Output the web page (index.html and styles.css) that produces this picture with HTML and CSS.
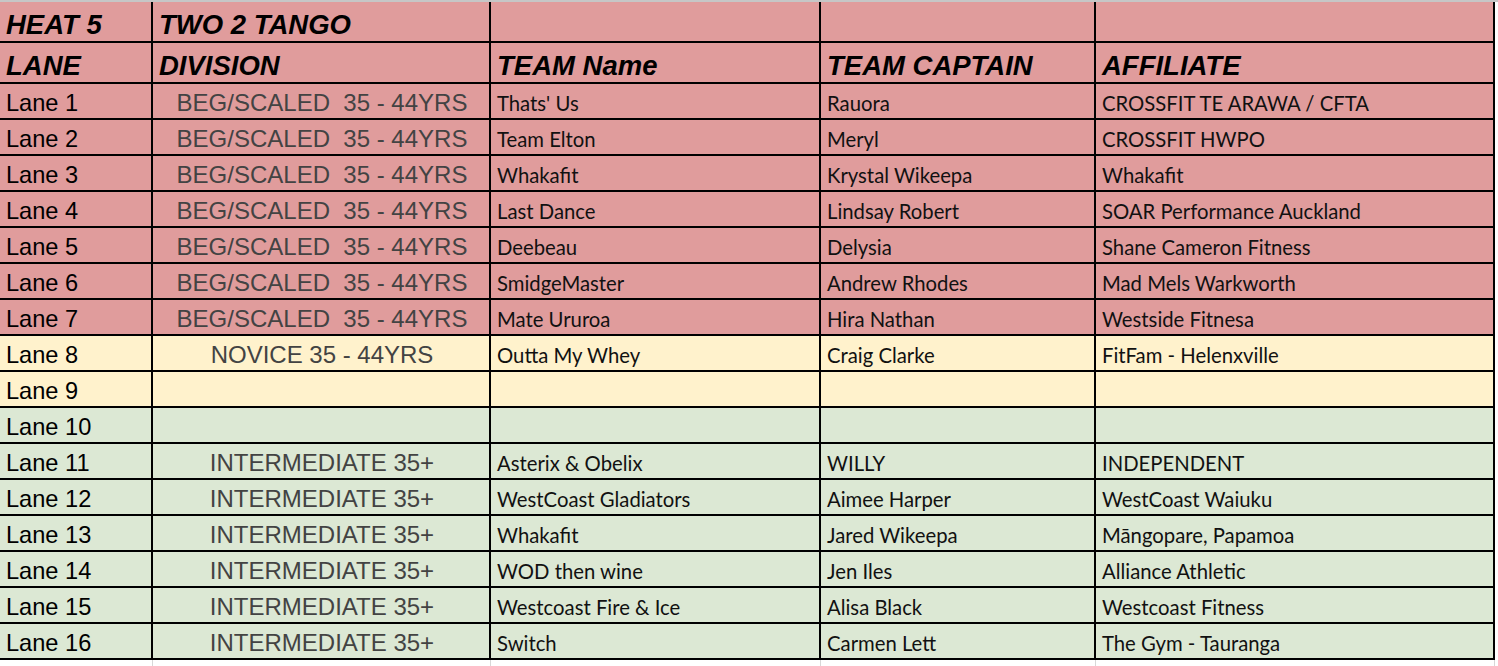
FILE: index.html
```html
<!DOCTYPE html>
<html>
<head>
<meta charset="utf-8">
<link rel="stylesheet" href="styles.css">
</head>
<body>
<div class="sheet">
  <div class="row head pink">
    <div class="c hd">HEAT 5</div>
    <div class="c hd">TWO 2 TANGO</div>
    <div class="c hd"></div>
    <div class="c hd"></div>
    <div class="c hd"></div>
  </div>
  <div class="row head pink">
    <div class="c hd">LANE</div>
    <div class="c hd">DIVISION</div>
    <div class="c hd">TEAM Name</div>
    <div class="c hd">TEAM CAPTAIN</div>
    <div class="c hd">AFFILIATE</div>
  </div>
  <div class="row pink"><div class="c lane">Lane 1</div><div class="c div">BEG/SCALED&nbsp; 35 - 44YRS</div><div class="c txt">Thats' Us</div><div class="c txt">Rauora</div><div class="c txt">CROSSFIT TE ARAWA / CFTA</div></div>
  <div class="row pink"><div class="c lane">Lane 2</div><div class="c div">BEG/SCALED&nbsp; 35 - 44YRS</div><div class="c txt">Team Elton</div><div class="c txt">Meryl</div><div class="c txt">CROSSFIT HWPO</div></div>
  <div class="row pink"><div class="c lane">Lane 3</div><div class="c div">BEG/SCALED&nbsp; 35 - 44YRS</div><div class="c txt">Whakafit</div><div class="c txt">Krystal Wikeepa</div><div class="c txt">Whakafit</div></div>
  <div class="row pink"><div class="c lane">Lane 4</div><div class="c div">BEG/SCALED&nbsp; 35 - 44YRS</div><div class="c txt">Last Dance</div><div class="c txt">Lindsay Robert</div><div class="c txt">SOAR Performance Auckland</div></div>
  <div class="row pink"><div class="c lane">Lane 5</div><div class="c div">BEG/SCALED&nbsp; 35 - 44YRS</div><div class="c txt">Deebeau</div><div class="c txt">Delysia</div><div class="c txt">Shane Cameron Fitness</div></div>
  <div class="row pink"><div class="c lane">Lane 6</div><div class="c div">BEG/SCALED&nbsp; 35 - 44YRS</div><div class="c txt">SmidgeMaster</div><div class="c txt">Andrew Rhodes</div><div class="c txt">Mad Mels Warkworth</div></div>
  <div class="row pink"><div class="c lane">Lane 7</div><div class="c div">BEG/SCALED&nbsp; 35 - 44YRS</div><div class="c txt">Mate Ururoa</div><div class="c txt">Hira Nathan</div><div class="c txt">Westside Fitnesa</div></div>
  <div class="row yellow"><div class="c lane">Lane 8</div><div class="c div">NOVICE 35 - 44YRS</div><div class="c txt">Outta My Whey</div><div class="c txt">Craig Clarke</div><div class="c txt">FitFam - Helenxville</div></div>
  <div class="row yellow"><div class="c lane">Lane 9</div><div class="c div"></div><div class="c txt"></div><div class="c txt"></div><div class="c txt"></div></div>
  <div class="row green"><div class="c lane">Lane 10</div><div class="c div"></div><div class="c txt"></div><div class="c txt"></div><div class="c txt"></div></div>
  <div class="row green"><div class="c lane">Lane 11</div><div class="c div">INTERMEDIATE 35+</div><div class="c txt">Asterix &amp; Obelix</div><div class="c txt">WILLY</div><div class="c txt">INDEPENDENT</div></div>
  <div class="row green"><div class="c lane">Lane 12</div><div class="c div">INTERMEDIATE 35+</div><div class="c txt">WestCoast Gladiators</div><div class="c txt">Aimee Harper</div><div class="c txt">WestCoast Waiuku</div></div>
  <div class="row green"><div class="c lane">Lane 13</div><div class="c div">INTERMEDIATE 35+</div><div class="c txt">Whakafit</div><div class="c txt">Jared Wikeepa</div><div class="c txt">Māngopare, Papamoa</div></div>
  <div class="row green"><div class="c lane">Lane 14</div><div class="c div">INTERMEDIATE 35+</div><div class="c txt">WOD then wine</div><div class="c txt">Jen Iles</div><div class="c txt">Alliance Athletic</div></div>
  <div class="row green"><div class="c lane">Lane 15</div><div class="c div">INTERMEDIATE 35+</div><div class="c txt">Westcoast Fire &amp; Ice</div><div class="c txt">Alisa Black</div><div class="c txt">Westcoast Fitness</div></div>
  <div class="row green"><div class="c lane">Lane 16</div><div class="c div">INTERMEDIATE 35+</div><div class="c txt">Switch</div><div class="c txt">Carmen Lett</div><div class="c txt">The Gym - Tauranga</div></div>
  <div class="row filler"><div class="c"></div><div class="c"></div><div class="c"></div><div class="c"></div><div class="c"></div></div>
</div>
</body>
</html>
```

FILE: styles.css
```css
html, body {
  margin: 0;
  padding: 0;
  background: #ffffff;
}
.sheet {
  border-top: 2px solid #c6c6c6;
  width: 1498px;
}
.row {
  display: grid;
  grid-template-columns: 153px 338px 330px 275px 399px;
  height: 36px;
}
.row.head {
  height: 41px;
}
.pink .c { background: #e09c9c; }
.yellow .c { background: #fff2cc; }
.green .c { background: #dce8d4; }
.c {
  box-sizing: border-box;
  border-right: 2px solid #000;
  border-bottom: 2px solid #000;
  display: flex;
  align-items: flex-end;
  padding: 0 4px 2px 6px;
  line-height: 26px;
  white-space: nowrap;
  overflow: hidden;
}
.hd {
  font-family: "Liberation Sans", Arial, sans-serif;
  font-weight: bold;
  font-style: italic;
  font-size: 27.5px;
  color: #000;
  padding-left: 6px;
  padding-bottom: 3px;
}
.lane {
  font-family: "Liberation Sans", Arial, sans-serif;
  font-size: 23.6px;
  color: #000;
}
.div {
  font-family: "Liberation Sans", Arial, sans-serif;
  font-size: 24px;
  color: #434343;
  justify-content: center;
}
.txt {
  font-family: Lato, "Open Sans", sans-serif;
  font-size: 20.3px;
  color: #111;
  padding-left: 6px;
  padding-bottom: 2px;
}
.filler {
  height: 8px;
}
.filler .c {
  background: #fff;
  border-bottom: none;
  border-right: 1px solid #d8d8d8;
}
```
